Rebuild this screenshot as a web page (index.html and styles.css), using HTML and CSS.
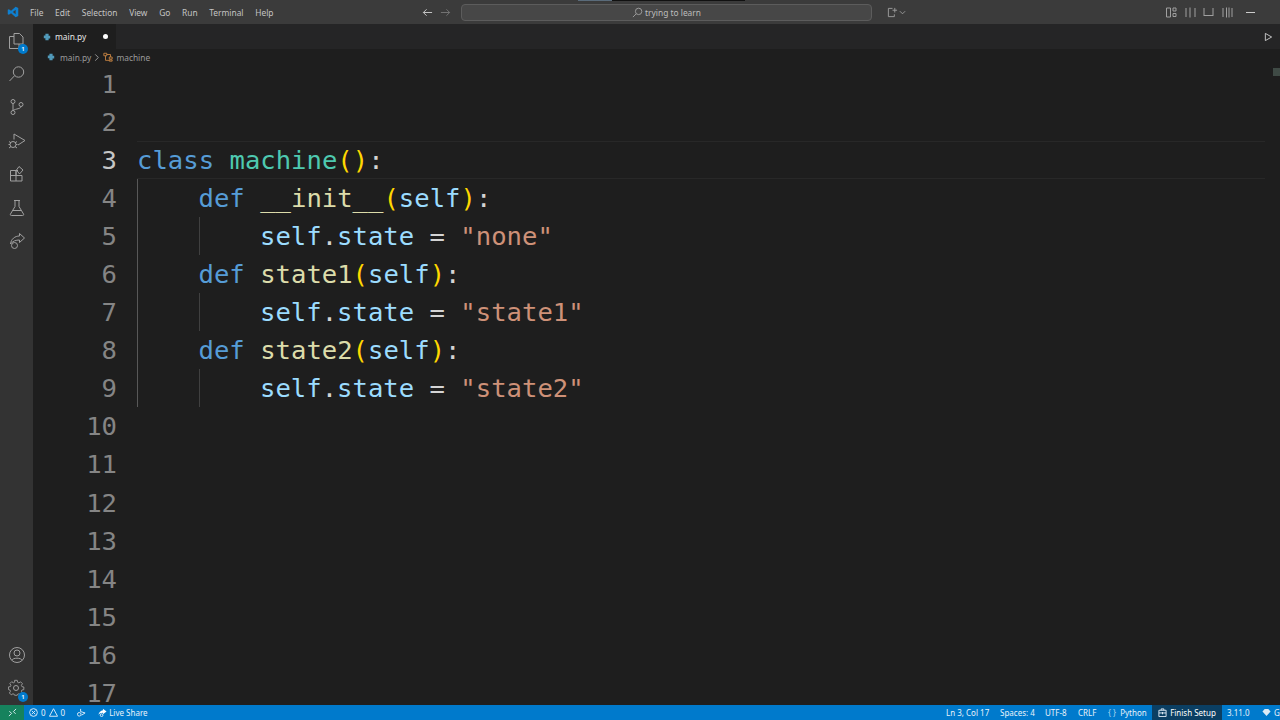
FILE: index.html
```html
<!DOCTYPE html>
<html lang="en">
<head>
  <meta charset="UTF-8">
  <title>main.py - trying to learn</title>
  <link rel="stylesheet" href="styles.css">
</head>
<body>
  <div class="window">
    <div class="load-bar"><span class="load-part"></span></div>

    <!-- title bar -->
    <header class="titlebar">
      <svg class="logo" viewBox="0 0 16 16"><path fill="#0f7fcf" d="M11.500 1 15 2.600v10.800L11.500 15 5.400 9.600 2.600 11.800 1 11V5l1.600-.8 2.800 2.200zM11.500 5 7.800 8l3.700 3z"/></svg>
      <nav class="menu">
        <span>File</span><span>Edit</span><span>Selection</span><span>View</span><span>Go</span><span>Run</span><span>Terminal</span><span>Help</span>
      </nav>
      <div class="nav-arrows">
        <svg class="icon-sm" viewBox="0 0 12 12"><path d="M11 6H1.500M5 2.500 1.500 6 5 9.500" class="ln light"/></svg>
        <svg class="icon-sm" viewBox="0 0 12 12"><path d="M1 6h9.500M7 2.500 10.500 6 7 9.500" class="ln dim"/></svg>
      </div>
      <div class="search">
        <svg class="icon-sm" viewBox="0 0 12 12"><circle cx="7.200" cy="4.800" r="3.500" class="ln"/><path d="M4.600 7.400 1 11" class="ln"/></svg>
        <span>trying to learn</span>
      </div>
      <div class="copilot">
        <svg class="icon-sm" viewBox="0 0 12 12"><path d="M6 1.500H1.500v9H8V8M8.500 1v5M6 3.500h5" class="ln"/></svg>
        <svg class="chev" viewBox="0 0 8 8"><path d="M1 2.500 4 5.500 7 2.500" class="ln"/></svg>
      </div>
      <div class="layout-btns">
        <svg class="icon-md" viewBox="0 0 11 11"><path d="M.5 1h4v9h-4zM7 1h3v3H7zM7 6.500h3v3H7z" class="ln"/></svg>
        <svg class="icon-md" viewBox="0 0 11 11"><path d="M1 1v9M5 .5v10M10 1v9" class="ln"/></svg>
        <svg class="icon-md" viewBox="0 0 11 11"><path d="M1 1v8M10 1v8M1 8.500h9" class="ln"/></svg>
        <svg class="icon-md" viewBox="0 0 11 11"><path d="M1 1v9M4.500 .5v10M7 .5v10M10 1v9" class="ln"/></svg>
      </div>
      <span class="win-min"></span>
      <span class="win-max"></span>
    </header>

    <div class="main">
      <!-- activity bar -->
      <aside class="activity">
        <div class="act-top">
          <div class="act-item">
            <svg class="act-icon" viewBox="0 0 18 18"><path d="M6 4.500H1.500v12H11V12M6 1.500h5.500l3.500 3.500V12H6z" class="ln"/></svg>
            <span class="badge">1</span>
          </div>
          <div class="act-item">
            <svg class="act-icon" viewBox="0 0 18 18"><circle cx="10.500" cy="7" r="5.200" class="ln"/><path d="M6.700 10.600 1.500 16" class="ln"/></svg>
          </div>
          <div class="act-item">
            <svg class="act-icon" viewBox="0 0 18 18"><circle cx="5" cy="3.500" r="2" class="ln"/><circle cx="5" cy="14.500" r="2" class="ln"/><circle cx="13" cy="6.500" r="2" class="ln"/><path d="M5 5.500v7M13 8.500c0 2.500-5 2-8 4" class="ln"/></svg>
          </div>
          <div class="act-item">
            <svg class="act-icon" viewBox="0 0 18 18"><path d="M6 2v5.500M6 2l11 6.500-7 4.500" class="ln"/><circle cx="5" cy="12.500" r="3" class="ln"/><path d="M1 9.500l2 1.500M9 9.500 7 11M.5 12.500H2M8 12.500h1.500M1 16l2-1.500M9 16l-2-1.500" class="ln"/></svg>
          </div>
          <div class="act-item">
            <svg class="act-icon" viewBox="0 0 18 18"><path d="M2.500 5.500H8V16H2.500zM2.500 10.500H14V16H8M8 5.500h2M8 10.500V5.500M11 1.500l4 3.500-3.500 4L8.500 5z" class="ln"/></svg>
          </div>
          <div class="act-item">
            <svg class="act-icon" viewBox="0 0 18 18"><path d="M6 1.500h6M7 1.500v6L2.500 15c-.5 1 0 1.500 1 1.500h11c1 0 1.500-.5 1-1.500L11 7.500v-6M5 11.500h8" class="ln"/></svg>
          </div>
          <div class="act-item">
            <svg class="act-icon" viewBox="0 0 18 18"><path d="M11.500 1.500 16.500 6l-5 4.500V8C8 8 4.500 9 2.500 12 3 7 7 4 11.500 4z" class="ln"/><circle cx="6.500" cy="13.500" r="3" class="ln"/></svg>
          </div>
        </div>
        <div class="act-bottom">
          <div class="act-item">
            <svg class="act-icon" viewBox="0 0 18 18"><circle cx="9" cy="9" r="7.500" class="ln"/><circle cx="9" cy="7" r="3" class="ln"/><path d="M3.800 14.300C5 11.500 13 11.500 14.200 14.300" class="ln"/></svg>
          </div>
          <div class="act-item">
            <svg class="act-icon" viewBox="0 0 18 18"><path d="M7.500 1.500h3l.4 2.200 1.500.7 1.900-1.200 2.100 2.100-1.200 1.900.6 1.500 2.200.4v3l-2.200.4-.6 1.500 1.200 1.900-2.100 2.100-1.900-1.200-1.500.6-.4 1.100h-3l-.4-1.100-1.500-.6-1.900 1.200-2.100-2.100 1.200-1.900-.6-1.500L.5 12V9l2.200-.4.600-1.500-1.200-1.900 2.100-2.100 1.900 1.200 1.500-.7z" class="ln" transform="scale(.88)"/><circle cx="8" cy="9" r="2.500" class="ln"/></svg>
            <span class="badge">1</span>
          </div>
        </div>
      </aside>

      <!-- editor -->
      <main class="editor">
        <div class="tabs">
          <div class="tab">
            <svg class="py-icon" viewBox="0 0 10 10"><path fill="#519aba" d="M3 1h4v2.500h2V7H7v2H3V6.500H1V3h2z"/></svg>
            <span class="tab-name">main.py</span>
            <span class="dirty"></span>
          </div>
          <svg class="run-icon" viewBox="0 0 10 10"><path d="M1.500 1v8L8.500 5z" class="ln light"/></svg>
        </div>
        <div class="crumbs">
          <svg class="py-icon" viewBox="0 0 10 10"><path fill="#519aba" d="M3 1h4v2.500h2V7H7v2H3V6.500H1V3h2z"/></svg>
          <span>main.py</span>
          <svg class="crumb-sep" viewBox="0 0 6 10"><path d="M1 1.500 4.500 5 1 8.500" class="ln"/></svg>
          <svg class="class-icon" viewBox="0 0 12 12"><path d="M1 1.500h3.500v3H1zM7.500 6h3.500v2.500H7.500zM7.500 9.500h3.500V11H7.500zM4.500 3H9v3M3 4.500V10h4.500" class="ln orange"/></svg>
          <span>machine</span>
        </div>
        <div class="code">
          <div class="line"><span class="num">1</span></div>
          <div class="line"><span class="num">2</span></div>
          <div class="line current"><span class="num">3</span><span class="src"><span class="kw">class</span> <span class="cls">machine</span><span class="br">()</span>:</span></div>
          <div class="line"><span class="num">4</span><span class="src"><span class="guide first"></span><span class="kw">def</span> <span class="fn">__init__</span><span class="br">(</span><span class="var">self</span><span class="br">)</span>:</span></div>
          <div class="line"><span class="num">5</span><span class="src"><span class="guide first"></span><span class="guide"></span><span class="var">self</span>.<span class="var">state</span> = <span class="str">"none"</span></span></div>
          <div class="line"><span class="num">6</span><span class="src"><span class="guide first"></span><span class="kw">def</span> <span class="fn">state1</span><span class="br">(</span><span class="var">self</span><span class="br">)</span>:</span></div>
          <div class="line"><span class="num">7</span><span class="src"><span class="guide first"></span><span class="guide"></span><span class="var">self</span>.<span class="var">state</span> = <span class="str">"state1"</span></span></div>
          <div class="line"><span class="num">8</span><span class="src"><span class="guide first"></span><span class="kw">def</span> <span class="fn">state2</span><span class="br">(</span><span class="var">self</span><span class="br">)</span>:</span></div>
          <div class="line"><span class="num">9</span><span class="src"><span class="guide first"></span><span class="guide"></span><span class="var">self</span>.<span class="var">state</span> = <span class="str">"state2"</span></span></div>
          <div class="line"><span class="num">10</span></div>
          <div class="line"><span class="num">11</span></div>
          <div class="line"><span class="num">12</span></div>
          <div class="line"><span class="num">13</span></div>
          <div class="line"><span class="num">14</span></div>
          <div class="line"><span class="num">15</span></div>
          <div class="line"><span class="num">16</span></div>
          <div class="line"><span class="num">17</span></div>
        </div>
        <div class="minimap"></div>
      </main>
    </div>

    <!-- status bar -->
    <footer class="statusbar">
      <div class="remote">
        <svg class="st-icon" viewBox="0 0 10 10"><path d="M1 9 4 6 1.500 3.500M9 1 6 4 8.500 6.500" class="ln white"/></svg>
      </div>
      <div class="st-left">
        <svg class="st-icon" viewBox="0 0 10 10"><circle cx="5" cy="5" r="4.300" class="ln white"/><path d="M3 3l4 4M7 3 3 7" class="ln white"/></svg>
        <span class="st-num">0</span>
        <svg class="st-icon st-warn" viewBox="0 0 10 10"><path d="M5 .8 9.500 9.200H.5z" class="ln white"/></svg>
        <span class="st-num">0</span>
        <svg class="st-icon st-debug" viewBox="0 0 10 10"><path d="M4 1v3l5 1.500L5 8" class="ln white"/><circle cx="2.500" cy="7" r="2" class="ln white"/></svg>
        <svg class="st-icon st-share" viewBox="0 0 10 10"><path d="M5.500 .8 9.500 4 5.500 7V5.200C3 5.200 1.500 6 .5 7.500 1 4.500 3 3 5.500 2.500z" fill="#fff"/><circle cx="4" cy="8" r="1.500" class="ln white"/></svg>
        <span>Live Share</span>
      </div>
      <div class="st-right">
        <span class="st-ln">Ln 3, Col 17</span>
        <span class="st-spaces">Spaces: 4</span>
        <span class="st-enc">UTF-8</span>
        <span class="st-eol">CRLF</span>
        <span class="st-lang"><span class="st-braces">{ }</span>Python</span>
        <span class="st-setup">
          <svg class="st-icon" viewBox="0 0 10 10"><path d="M1 2.500h8v7H1zM3.500 2.500V1h3v1.500M1 5.500h8M5 4.500v2.500" class="ln white"/></svg>
          Finish Setup
        </span>
        <span class="st-ver">3.11.0</span>
        <span class="st-go">
          <svg class="st-icon" viewBox="0 0 10 10"><path d="M3 1h4l2.500 3L5 9 .5 4z" fill="#dbeaf5"/></svg>
          Go Live
        </span>
      </div>
    </footer>
  </div>
</body>
</html>
```

FILE: styles.css
```css
* {
  box-sizing: border-box;
}
html, body {
  margin: 0;
  padding: 0;
  height: 100%;
  overflow: hidden;
}
body {
  background: #1e1e1e;
  font-family: 'Noto Sans', 'Open Sans', sans-serif;
  font-size: 9px;
  color: #ccc;
}
.window {
  position: relative;
  width: 1280px;
  height: 720px;
  display: flex;
  flex-direction: column;
  overflow: hidden;
}
.load-bar {
  position: absolute;
  top: 0;
  left: 578px;
  width: 167px;
  height: 1px;
  background: #111;
}
.load-part {
  display: block;
  width: 34px;
  height: 1px;
  background: #5a6b7a;
}

/* svg line helpers */
.ln {
  fill: none;
  stroke: #a0a0a0;
  stroke-width: 1;
}
.ln.light {
  stroke: #d0d0d0;
}
.ln.dim {
  stroke: #777;
}
.ln.orange {
  stroke: #d18a45;
}
.ln.white {
  stroke: #e8f2fa;
}

/* title bar */
.titlebar {
  height: 24px;
  flex: none;
  display: flex;
  align-items: center;
  background: #3b3b3b;
  padding-left: 7px;
}
.titlebar > * {
  flex: none;
}
.logo {
  width: 12px;
  height: 12px;
}
.menu {
  display: flex;
  margin-left: 11px;
  gap: 11.700px;
  width: 392px;
  color: #c4c4c4;
  font-size: 8.400px;
}
.nav-arrows {
  display: flex;
  gap: 7px;
  width: 39px;
}
.icon-sm {
  width: 11px;
  height: 11px;
  flex: none;
}
.search {
  width: 411px;
  height: 17px;
  display: flex;
  align-items: center;
  justify-content: center;
  gap: 2px;
  background: #474747;
  border: 1px solid #5c5c5c;
  border-radius: 4px;
  color: #bdbdbd;
  font-size: 8.400px;
}
.copilot {
  display: flex;
  align-items: center;
  gap: 1px;
  margin-left: 15px;
  width: 279px;
}
.chev {
  width: 7px;
  height: 7px;
}
.layout-btns {
  display: flex;
  gap: 7.500px;
}
.icon-md {
  width: 11px;
  height: 11px;
}
.win-min {
  width: 9px;
  height: 1px;
  margin-left: 13px;
  background: #ccc;
}
.win-max {
  width: 8px;
  height: 8px;
  margin-left: 25px;
  border: 1px solid #ccc;
}

/* activity bar */
.main {
  flex: 1;
  min-height: 0;
  display: flex;
}
.activity {
  width: 33px;
  flex: none;
  background: #333;
  display: flex;
  flex-direction: column;
  justify-content: space-between;
}
.act-item {
  position: relative;
  height: 33.400px;
  display: flex;
  align-items: center;
  justify-content: center;
}
.act-icon {
  width: 18px;
  height: 18px;
}
.badge {
  position: absolute;
  right: 5px;
  bottom: 3px;
  width: 10px;
  height: 10px;
  border-radius: 50%;
  background: #007acc;
  color: #fff;
  font-size: 6px;
  font-weight: 600;
  line-height: 10px;
  text-align: center;
}

/* editor */
.editor {
  position: relative;
  flex: 1;
  min-width: 0;
  display: flex;
  flex-direction: column;
}
.tabs {
  height: 25px;
  flex: none;
  display: flex;
  align-items: center;
  justify-content: space-between;
  background: #252526;
}
.tab {
  width: 83px;
  height: 25px;
  display: flex;
  align-items: center;
  padding-left: 10px;
  background: #1e1e1e;
  color: #e6e6e6;
  font-size: 8.400px;
}
.py-icon {
  width: 8px;
  height: 8px;
  flex: none;
}
.tab-name {
  margin-left: 4px;
  width: 48px;
}
.dirty {
  width: 5px;
  height: 5px;
  border-radius: 50%;
  background: #fff;
}
.run-icon {
  width: 9px;
  height: 10px;
  margin-right: 7px;
}
.crumbs {
  height: 16px;
  flex: none;
  display: flex;
  align-items: center;
  padding-left: 14px;
  color: #9a9a9a;
  font-size: 8.400px;
}
.crumbs .py-icon {
  margin-right: 5px;
}
.crumb-sep {
  width: 6px;
  height: 9px;
  margin: 0 3px 0 3px;
}
.class-icon {
  width: 10px;
  height: 10px;
  margin-right: 3px;
}
.code {
  flex: 1;
  min-height: 0;
  overflow: hidden;
  font-family: 'DejaVu Sans Mono', monospace;
  font-size: 25.600px;
  color: #d4d4d4;
}
.line {
  height: 38.060px;
  line-height: 38px;
  display: flex;
  white-space: pre;
}
.num {
  width: 84px;
  flex: none;
  text-align: right;
  color: #858585;
}
.src {
  display: block;
  margin-left: 20px;
  flex: 1;
  min-width: 0;
}
.current .num {
  color: #c6c6c6;
}
.current .src {
  margin-right: 15px;
  border-top: 1px solid #282828;
  border-bottom: 1px solid #282828;
  line-height: 36px;
}
.guide {
  display: inline-block;
  width: 61.500px;
  height: 38px;
  vertical-align: top;
  border-left: 1px solid #404040;
}
.guide.first {
  border-left-color: #585858;
}
.kw {
  color: #569cd6;
}
.cls {
  color: #4ec9b0;
}
.fn {
  color: #dcdcaa;
}
.br {
  color: #ffd700;
}
.var {
  color: #9cdcfe;
}
.str {
  color: #ce9178;
}
.minimap {
  position: absolute;
  top: 44px;
  right: 0;
  width: 7px;
  height: 8px;
  background: #3f4a45;
}

/* status bar */
.statusbar {
  height: 15px;
  flex: none;
  display: flex;
  align-items: center;
  background: #007acc;
  color: #e8f2fa;
  font-size: 8px;
  white-space: nowrap;
}
.remote {
  width: 24px;
  height: 15px;
  flex: none;
  background: #16825d;
  display: flex;
  align-items: center;
  justify-content: center;
}
.st-icon {
  width: 9px;
  height: 9px;
  flex: none;
}
.st-left {
  display: flex;
  align-items: center;
  flex: none;
  margin-left: 5px;
  width: 917px;
}
.st-num {
  margin-left: 3px;
}
.st-warn {
  margin-left: 3px;
}
.st-debug {
  margin-left: 12px;
}
.st-share {
  margin-left: 12px;
  margin-right: 2px;
}
.st-right {
  flex: none;
  display: flex;
  align-items: center;
}
.st-right > * {
  flex: none;
}
.st-ln {
  width: 54px;
}
.st-spaces {
  width: 45px;
}
.st-enc {
  width: 33px;
}
.st-eol {
  width: 30px;
}
.st-lang {
  width: 44px;
}
.st-braces {
  margin-right: 4px;
  color: #a9d3ee;
}
.st-setup {
  height: 15px;
  width: 70px;
  display: flex;
  align-items: center;
  justify-content: center;
  gap: 3px;
  background: #0b3f63;
  color: #fff;
}
.st-ver {
  margin-left: 5px;
  width: 35px;
}
.st-go {
  display: flex;
  align-items: center;
  gap: 3px;
}
```
